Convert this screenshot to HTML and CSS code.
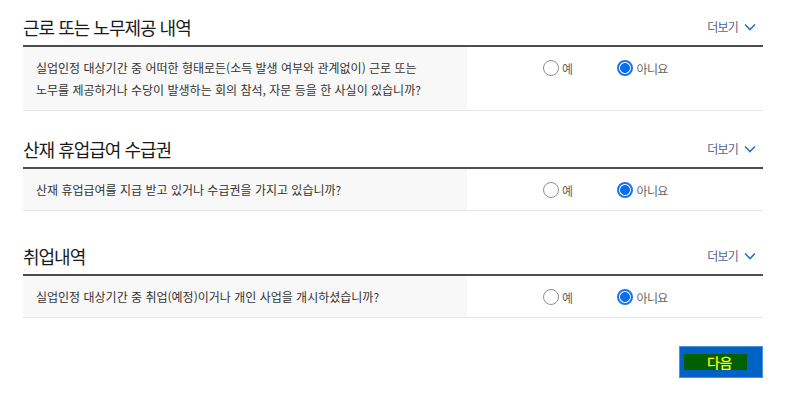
FILE: index.html
```html
<!DOCTYPE html>
<html lang="ko">
<head>
<meta charset="utf-8">
<link rel="stylesheet" href="styles.css">
</head>
<body>
<div class="page">
  <section class="sec sec-first">
    <div class="sec-head">
      <h2 class="sec-title">근로 또는 노무제공 내역</h2>
      <a class="more">더보기 <svg class="chev" width="12" height="8" viewBox="0 0 12 8"><polyline points="1,1.5 6,6.5 11,1.5" fill="none" stroke="#2f74d0" stroke-width="1.7"/></svg></a>
    </div>
    <div class="row">
      <div class="q">실업인정 대상기간 중 어떠한 형태로든(소득 발생 여부와 관계없이) 근로 또는<br>노무를 제공하거나 수당이 발생하는 회의 참석, 자문 등을 한 사실이 있습니까?</div>
      <div class="opts">
        <label class="opt"><span class="radio"></span>예</label>
        <label class="opt opt-no"><span class="radio on"></span>아니요</label>
      </div>
    </div>
  </section>
  <section class="sec sec-second">
    <div class="sec-head">
      <h2 class="sec-title">산재 휴업급여 수급권</h2>
      <a class="more">더보기 <svg class="chev" width="12" height="8" viewBox="0 0 12 8"><polyline points="1,1.5 6,6.5 11,1.5" fill="none" stroke="#2f74d0" stroke-width="1.7"/></svg></a>
    </div>
    <div class="row">
      <div class="q">산재 휴업급여를 지급 받고 있거나 수급권을 가지고 있습니까?</div>
      <div class="opts">
        <label class="opt"><span class="radio"></span>예</label>
        <label class="opt opt-no"><span class="radio on"></span>아니요</label>
      </div>
    </div>
  </section>
  <section class="sec sec-third">
    <div class="sec-head">
      <h2 class="sec-title">취업내역</h2>
      <a class="more">더보기 <svg class="chev" width="12" height="8" viewBox="0 0 12 8"><polyline points="1,1.5 6,6.5 11,1.5" fill="none" stroke="#2f74d0" stroke-width="1.7"/></svg></a>
    </div>
    <div class="row">
      <div class="q">실업인정 대상기간 중 취업(예정)이거나 개인 사업을 개시하셨습니까?</div>
      <div class="opts">
        <label class="opt"><span class="radio"></span>예</label>
        <label class="opt opt-no"><span class="radio on"></span>아니요</label>
      </div>
    </div>
  </section>
  <div class="actions">
    <button class="next"><span class="next-label">다음</span></button>
  </div>
</div>
</body>
</html>
```

FILE: styles.css
```css
html, body {
  margin: 0;
  padding: 0;
  background: #fff;
}
body {
  font-family: "Noto Sans CJK KR", "Noto Sans", sans-serif;
  color: #333;
}
.page {
  width: 740px;
  margin-left: 23px;
}
.sec-head {
  display: flex;
  align-items: flex-end;
  justify-content: space-between;
  padding-bottom: 5px;
  border-bottom: 2px solid #4d4d4d;
}
.sec-first .sec-head { padding-top: 14px; }
.sec-second .sec-head { padding-top: 25px; }
.sec-third .sec-head { padding-top: 32px; }
.sec-title {
  margin: 0;
  font-size: 18px;
  line-height: 26px;
  font-weight: 400;
  letter-spacing: -1px;
  color: #1a1a1a;
}
.more {
  display: flex;
  align-items: center;
  gap: 6px;
  margin-right: 7px;
  font-size: 12px;
  line-height: 26px;
  letter-spacing: -0.8px;
  color: #56648f;
}
.chev { display: block; }
.row {
  display: flex;
  border-bottom: 1px solid #e6e6e6;
}
.q {
  width: 444px;
  box-sizing: border-box;
  padding: 10px 0 9px 13px;
  background: #f8f8f8;
  font-size: 12px;
  line-height: 22px;
  letter-spacing: 0;
  color: #333;
  white-space: nowrap;
}
.opts {
  display: flex;
  align-items: flex-start;
  padding: 10px 0 0 76px;
}
.opt {
  display: flex;
  align-items: center;
  gap: 3px;
  height: 22px;
  font-size: 12px;
  letter-spacing: -0.6px;
  color: #666;
}
.opt-no { margin-left: 45px; }
.radio {
  width: 16px;
  height: 16px;
  box-sizing: border-box;
  border: 1px solid #8f8f8f;
  border-radius: 50%;
  background: #fff;
}
.radio.on {
  border: 2px solid #1a73e8;
  background: radial-gradient(circle, #0a6cf0 0 4.6px, #fff 5.2px);
}
.actions {
  display: flex;
  justify-content: flex-end;
  margin-top: 28px;
}
.next {
  width: 84px;
  height: 32px;
  padding: 0 0 0 4px;
  border: 1px solid #4f95db;
  background: #0062c6;
  display: flex;
  align-items: center;
  justify-content: flex-start;
  font-family: "Noto Sans CJK KR", sans-serif;
}
.next-label {
  display: block;
  width: 63px;
  height: 16px;
  box-sizing: border-box;
  padding-left: 23px;
  background: #006000;
  color: #ffff00;
  font-size: 14px;
  font-weight: 500;
  line-height: 16px;
  text-align: left;
  letter-spacing: -0.5px;
}
```
